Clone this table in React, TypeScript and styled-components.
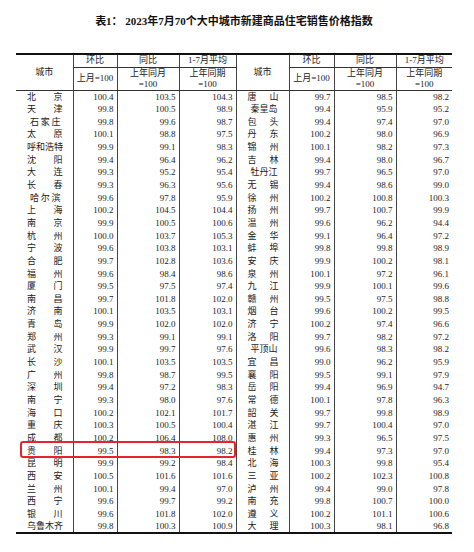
import styled, { createGlobalStyle } from "styled-components";

type Row = [string, string, string, string];

const leftRows: Row[] = [
  ["北京", "100.4", "103.5", "104.3"],
  ["天津", "99.8", "100.5", "98.9"],
  ["石家庄", "99.8", "99.6", "98.7"],
  ["太原", "100.1", "98.8", "97.5"],
  ["呼和浩特", "99.9", "99.1", "98.3"],
  ["沈阳", "99.4", "96.4", "96.2"],
  ["大连", "99.3", "95.2", "95.4"],
  ["长春", "99.3", "96.3", "95.6"],
  ["哈尔滨", "99.6", "97.8", "95.9"],
  ["上海", "100.2", "104.5", "104.4"],
  ["南京", "99.9", "100.5", "100.6"],
  ["杭州", "100.0", "103.7", "105.3"],
  ["宁波", "99.6", "103.8", "103.1"],
  ["合肥", "99.7", "102.8", "103.6"],
  ["福州", "99.6", "98.4", "98.6"],
  ["厦门", "99.5", "97.5", "97.4"],
  ["南昌", "99.7", "101.8", "102.0"],
  ["济南", "100.1", "103.5", "103.1"],
  ["青岛", "99.9", "102.0", "102.0"],
  ["郑州", "99.3", "99.1", "99.1"],
  ["武汉", "99.9", "99.7", "97.6"],
  ["长沙", "100.1", "103.5", "103.5"],
  ["广州", "99.8", "98.7", "99.5"],
  ["深圳", "99.4", "97.2", "98.3"],
  ["南宁", "99.3", "98.0", "97.6"],
  ["海口", "100.2", "102.1", "101.7"],
  ["重庆", "100.3", "100.5", "100.4"],
  ["成都", "100.2", "106.4", "108.0"],
  ["贵阳", "99.5", "98.3", "98.2"],
  ["昆明", "99.9", "99.2", "98.4"],
  ["西安", "100.5", "101.6", "101.6"],
  ["兰州", "100.1", "99.4", "97.0"],
  ["西宁", "99.6", "99.7", "99.2"],
  ["银川", "99.6", "101.8", "102.0"],
  ["乌鲁木齐", "99.8", "100.3", "100.9"],
];

const rightRows: Row[] = [
  ["唐山", "99.7", "98.5", "98.2"],
  ["秦皇岛", "99.4", "95.9", "95.2"],
  ["包头", "99.4", "97.4", "97.0"],
  ["丹东", "100.2", "98.0", "96.9"],
  ["锦州", "100.1", "98.2", "97.3"],
  ["吉林", "99.4", "98.0", "96.7"],
  ["牡丹江", "99.7", "96.5", "97.0"],
  ["无锡", "99.4", "98.6", "99.0"],
  ["徐州", "100.2", "100.8", "100.3"],
  ["扬州", "99.7", "100.7", "99.9"],
  ["温州", "99.6", "96.2", "94.4"],
  ["金华", "99.1", "96.4", "97.2"],
  ["蚌埠", "99.8", "99.8", "98.9"],
  ["安庆", "99.9", "100.2", "98.1"],
  ["泉州", "100.1", "97.2", "96.1"],
  ["九江", "99.9", "100.1", "99.6"],
  ["赣州", "99.5", "97.5", "98.8"],
  ["烟台", "99.6", "100.2", "99.5"],
  ["济宁", "100.2", "97.4", "96.6"],
  ["洛阳", "99.7", "98.2", "97.2"],
  ["平顶山", "99.6", "98.3", "98.2"],
  ["宜昌", "99.0", "96.2", "95.9"],
  ["襄阳", "99.5", "99.1", "97.9"],
  ["岳阳", "99.4", "96.9", "94.7"],
  ["常德", "100.1", "97.8", "96.3"],
  ["韶关", "99.7", "99.8", "98.9"],
  ["湛江", "99.7", "100.4", "97.0"],
  ["惠州", "99.3", "96.5", "97.5"],
  ["桂林", "99.4", "97.3", "97.0"],
  ["北海", "100.3", "99.8", "95.4"],
  ["三亚", "100.2", "102.3", "100.8"],
  ["泸州", "99.4", "99.0", "97.8"],
  ["南充", "99.8", "100.7", "100.0"],
  ["遵义", "100.2", "101.1", "100.6"],
  ["大理", "100.3", "98.1", "96.8"],
];

const MARKED = "贵阳";

const GlobalStyle = createGlobalStyle`
  html, body {
    margin: 0;
    padding: 0;
    background: #ffffff;
  }
`;

const Page = styled.div`
  width: 474px;
  height: 552px;
  padding: 14px 0 0 16px;
  box-sizing: border-box;
  font-family: "Liberation Serif", "Noto Sans CJK SC", serif;
  color: #1d1d1d;
`;

const Title = styled.h1`
  width: 436px;
  margin: 0 0 25px;
  font-size: 11px;
  line-height: 14px;
  font-weight: 700;
  text-align: center;
  color: #111;
`;

const Table = styled.table`
  width: 436px;
  border-collapse: collapse;
  table-layout: fixed;
  border-top: 2px solid #111;
  border-bottom: 2px solid #111;
`;

const HeadCell = styled.th<{ $last?: boolean }>`
  padding: 0;
  font-size: 9px;
  line-height: 11px;
  font-weight: 400;
  text-align: center;
  vertical-align: middle;
  color: #222;
  border-bottom: 1px solid #333;
  border-right: ${(p) => (p.$last ? "none" : "1px solid #444")};
`;

const HeadRow = styled.tr<{ $h: number }>`
  height: ${(p) => p.$h}px;
`;

const BodyRow = styled.tr`
  height: 12.66px;
`;

const CityCell = styled.td<{ $len: number; $marked?: boolean }>`
  position: relative;
  padding: 0 ${(p) => (p.$len === 3 ? 12 : 10)}px 0
    ${(p) => (p.$len === 3 ? 14 : 11)}px;
  font-size: 9px;
  line-height: 12px;
  text-align: justify;
  text-align-last: justify;
  white-space: nowrap;
  overflow: visible;
  border-right: 1px solid #444;
  color: #1a1a1a;

  &::after {
    content: "";
    display: ${(p) => (p.$marked ? "block" : "none")};
    position: absolute;
    left: 4px;
    top: -3px;
    width: 216px;
    height: 17px;
    box-sizing: border-box;
    border: 2px solid #e8232b;
    border-radius: 3px;
    pointer-events: none;
  }
`;

const NumCell = styled.td<{ $last?: boolean }>`
  padding: 0 3px 0 0;
  font-size: 9px;
  line-height: 12px;
  text-align: right;
  white-space: nowrap;
  border-right: ${(p) => (p.$last ? "none" : "1px solid #444")};
`;

const HeadGroup = ({ last }: { last?: boolean }) => (
  <>
    <HeadCell rowSpan={2}>城市</HeadCell>
    <HeadCell>环比</HeadCell>
    <HeadCell>同比</HeadCell>
    <HeadCell $last={last}>1-7月平均</HeadCell>
  </>
);

const SubHead = ({ last }: { last?: boolean }) => (
  <>
    <HeadCell>上月=100</HeadCell>
    <HeadCell>
      上年同月
      <br />
      =100
    </HeadCell>
    <HeadCell $last={last}>
      上年同期
      <br />
      =100
    </HeadCell>
  </>
);

const Cells = ({ row, last }: { row: Row; last?: boolean }) => (
  <>
    <CityCell $len={row[0].length} $marked={row[0] === MARKED}>
      {row[0]}
    </CityCell>
    <NumCell>{row[1]}</NumCell>
    <NumCell>{row[2]}</NumCell>
    <NumCell $last={last}>{row[3]}</NumCell>
  </>
);

export default function App() {
  return (
    <Page>
      <GlobalStyle />
      <Title>表1： 2023年7月70个大中城市新建商品住宅销售价格指数</Title>
      <Table>
        <colgroup>
          <col style={{ width: 57 }} />
          <col style={{ width: 44 }} />
          <col style={{ width: 62 }} />
          <col style={{ width: 57 }} />
          <col style={{ width: 53 }} />
          <col style={{ width: 45 }} />
          <col style={{ width: 62 }} />
          <col style={{ width: 56 }} />
        </colgroup>
        <thead>
          <HeadRow $h={13}>
            <HeadGroup />
            <HeadGroup last />
          </HeadRow>
          <HeadRow $h={22}>
            <SubHead />
            <SubHead last />
          </HeadRow>
        </thead>
        <tbody>
          {leftRows.map((row, i) => (
            <BodyRow key={row[0]}>
              <Cells row={row} />
              <Cells row={rightRows[i]} last />
            </BodyRow>
          ))}
        </tbody>
      </Table>
    </Page>
  );
}
